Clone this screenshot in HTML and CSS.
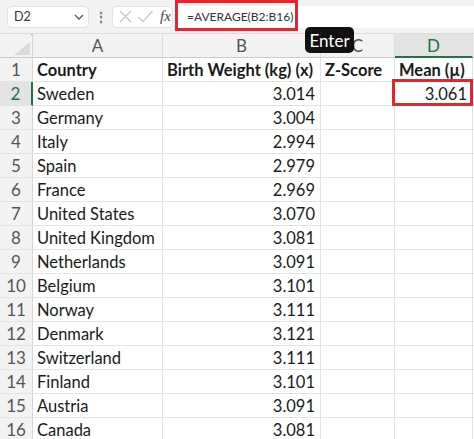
FILE: index.html
```html
<!DOCTYPE html>
<html>
<head>
<meta charset="utf-8">
<link rel="stylesheet" href="styles.css">
</head>
<body>
<div class="app">
  <div class="toolbar">
    <div class="namebox">
      <span class="name">D2</span>
      <svg class="chev" width="10" height="6" viewBox="0 0 10 6"><path d="M1 1 L5 5 L9 1" fill="none" stroke="#555" stroke-width="1.3"/></svg>
    </div>
    <div class="dots">⋮</div>
    <div class="fxbox">
      <svg width="15" height="15" viewBox="0 0 15 15"><path d="M2 2 L13 13 M13 2 L2 13" stroke="#c4c4c4" stroke-width="1.2" fill="none"/></svg>
      <svg width="17" height="15" viewBox="0 0 17 15"><path d="M1.5 8 L6 12.5 L15.5 2" stroke="#c4c4c4" stroke-width="1.2" fill="none"/></svg>
      <span class="fx">fx</span>
    </div>
    <div class="formula">=AVERAGE(B2:B16)</div>
  </div>
  <div class="sheet">
    <div class="corner"><svg width="33" height="24" viewBox="0 0 33 24"><path d="M30 8 L30 21 L14 21 Z" fill="#dadada"/><rect x="31" y="0" width="1.5" height="1.5" fill="#bbb"/></svg></div>
    <div class="ch">A</div><div class="ch">B</div><div class="ch">C</div><div class="ch sel">D</div><div class="ch"></div>

    <div class="rh">1</div><div class="c b">Country</div><div class="c b">Birth Weight (kg) (x)</div><div class="c b">Z-Score</div><div class="c b">Mean (µ)</div><div class="c"></div>
    <div class="rh sel">2</div><div class="c">Sweden</div><div class="c n">3.014</div><div class="c"></div><div class="c n">3.061</div><div class="c"></div>
    <div class="rh">3</div><div class="c">Germany</div><div class="c n">3.004</div><div class="c"></div><div class="c"></div><div class="c"></div>
    <div class="rh">4</div><div class="c">Italy</div><div class="c n">2.994</div><div class="c"></div><div class="c"></div><div class="c"></div>
    <div class="rh">5</div><div class="c">Spain</div><div class="c n">2.979</div><div class="c"></div><div class="c"></div><div class="c"></div>
    <div class="rh">6</div><div class="c">France</div><div class="c n">2.969</div><div class="c"></div><div class="c"></div><div class="c"></div>
    <div class="rh">7</div><div class="c">United States</div><div class="c n">3.070</div><div class="c"></div><div class="c"></div><div class="c"></div>
    <div class="rh">8</div><div class="c">United Kingdom</div><div class="c n">3.081</div><div class="c"></div><div class="c"></div><div class="c"></div>
    <div class="rh">9</div><div class="c">Netherlands</div><div class="c n">3.091</div><div class="c"></div><div class="c"></div><div class="c"></div>
    <div class="rh">10</div><div class="c">Belgium</div><div class="c n">3.101</div><div class="c"></div><div class="c"></div><div class="c"></div>
    <div class="rh">11</div><div class="c">Norway</div><div class="c n">3.111</div><div class="c"></div><div class="c"></div><div class="c"></div>
    <div class="rh">12</div><div class="c">Denmark</div><div class="c n">3.121</div><div class="c"></div><div class="c"></div><div class="c"></div>
    <div class="rh">13</div><div class="c">Switzerland</div><div class="c n">3.111</div><div class="c"></div><div class="c"></div><div class="c"></div>
    <div class="rh">14</div><div class="c">Finland</div><div class="c n">3.101</div><div class="c"></div><div class="c"></div><div class="c"></div>
    <div class="rh">15</div><div class="c">Austria</div><div class="c n">3.091</div><div class="c"></div><div class="c"></div><div class="c"></div>
    <div class="rh">16</div><div class="c">Canada</div><div class="c n">3.081</div><div class="c"></div><div class="c"></div><div class="c"></div>
  </div>
  <div class="mark mark-formula"></div>
  <div class="mark mark-cell"></div>
  <div class="tip">Enter</div>
</div>
</body>
</html>
```

FILE: styles.css
```css
* { box-sizing: border-box; }
html, body { margin: 0; padding: 0; background: #fff; }
body { width: 474px; height: 439px; overflow: hidden; font-family: Lato, "Liberation Sans", sans-serif; }
.app { position: relative; width: 474px; height: 439px; overflow: hidden; }

.toolbar {
  height: 34px;
  background: #f3f3f3;
  border-bottom: 1px solid #dcdcdc;
  display: flex;
  align-items: center;
  padding-left: 7px;
}
.namebox {
  width: 82px; height: 22px;
  background: #fff;
  border: 1px solid #e2e2e2;
  border-radius: 4px;
  display: flex; align-items: center; justify-content: space-between;
  padding: 0 4px 0 6px;
  font-size: 12.5px; color: #333;
}
.chev { margin-top: 1px; }
.dots { width: 23px; text-align: center; color: #777; font-size: 14px; font-weight: bold; }
.fxbox {
  width: 61px; height: 22px;
  background: #fff;
  border: 1px solid #e2e2e2;
  border-radius: 4px;
  display: flex; align-items: center; gap: 4px;
  padding-left: 5px;
}
.fx { font-family: "Liberation Serif", serif; font-style: italic; font-size: 15px; color: #444; margin-left: 2px; }
.formula {
  flex: 1;
  height: 22px;
  margin-left: 4px;
  background: #fff;
  display: flex; align-items: center;
  padding-left: 10px;
  font-size: 12px; color: #333;
}

.sheet {
  display: grid;
  grid-template-columns: 33px 130px 158px 74px 78px 1fr;
  grid-auto-rows: 24px;
}
.corner { background: #f3f3f3; border-right: 1px solid #d6d6d6; border-bottom: 1px solid #c9c9c9; }
.corner svg { display: block; }
.ch {
  background: #f3f3f3;
  border-right: 1px solid #dcdcdc;
  border-bottom: 1px solid #c9c9c9;
  color: #555; font-size: 17px;
  display: flex; align-items: center; justify-content: center;
}
.ch.sel { background: #e3e3e3; color: #217346; border-bottom: 2px solid #217346; }
.rh {
  background: #f3f3f3;
  border-right: 1px solid #d6d6d6;
  border-bottom: 1px solid #e3e3e3;
  color: #555; font-size: 17px;
  display: flex; align-items: center; justify-content: center;
}
.rh.sel { background: #e3e3e3; color: #217346; border-right: 2px solid #217346; }
.c {
  border-right: 1px solid #e3e3e3;
  border-bottom: 1px solid #e3e3e3;
  font-size: 16.5px; color: #1a1a1a;
  display: flex; align-items: center;
  padding: 0 4px;
  white-space: nowrap; overflow: hidden;
}
.c.b { font-weight: bold; }
.c.n { justify-content: flex-end; padding-right: 5px; }

.mark { position: absolute; border: 3px solid #e3262c; }
.mark-formula { left: 175px; top: 0; width: 123px; height: 31px; }
.mark-cell { left: 392px; top: 79px; width: 81px; height: 27px; }
.tip {
  position: absolute; left: 305px; top: 27px; width: 49px; height: 26px;
  background: #111; color: #fff; border-radius: 5px;
  font-size: 17px; display: flex; align-items: center; justify-content: center;
}
```
